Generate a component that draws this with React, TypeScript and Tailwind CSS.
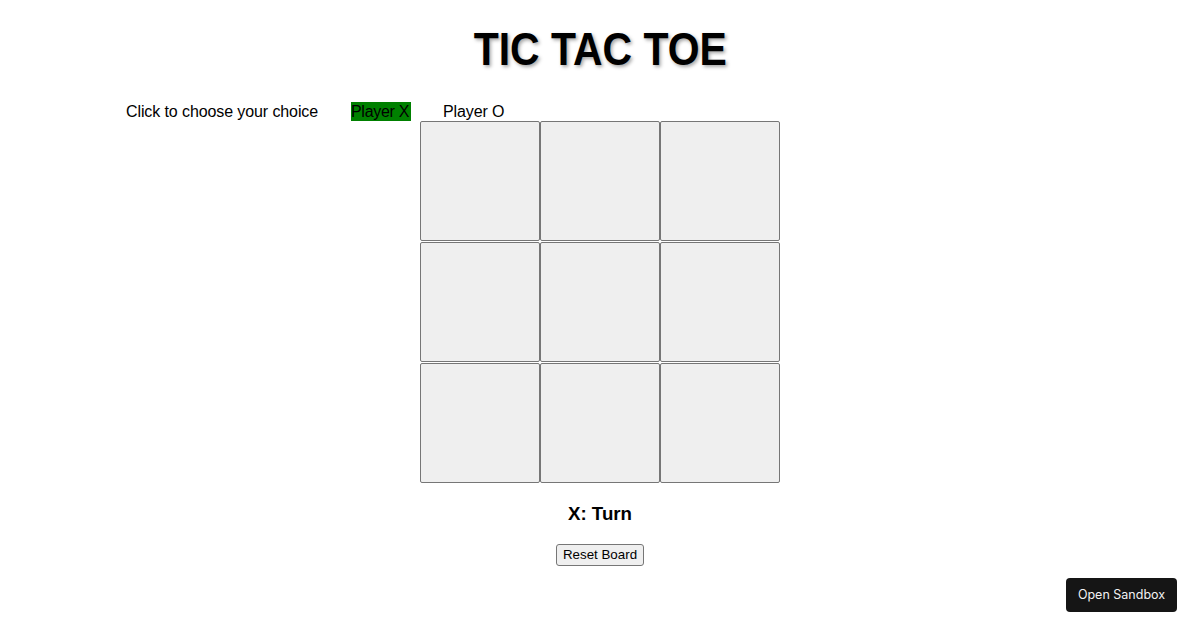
const cells = [0, 1, 2];

export default function App() {
  return (
    <div className="relative w-[1200px] h-[630px] bg-white text-black font-['Liberation_Sans',Arial,sans-serif]">
      {/* Title */}
      <div className="pt-[26px] flex justify-center">
        <h1 className="inline-block h-[46px] leading-[46px] text-[46px] font-bold scale-x-[0.89] [text-shadow:2px_2px_4px_rgba(0,0,0,0.35)]">
          TIC TAC TOE
        </h1>
      </div>

      {/* Player choice row */}
      <div className="mt-[30px] flex h-[19px] whitespace-nowrap pl-[126px] text-[16px] leading-[19px] tracking-[-0.1px]">
        <span className="w-[225px]">Click to choose your choice</span>
        <span className="inline-block h-[19px] w-[60px] bg-[#008000] tracking-[-0.3px]">Player X</span>
        <span className="ml-[32px]">Player O</span>
      </div>

      {/* Board */}
      <div className="mx-auto flex w-[360px] flex-col gap-[1px]">
        {cells.map((r) => (
          <div key={r} className="flex">
            {cells.map((c) => (
              <button
                key={c}
                className="h-[120px] w-[120px] rounded-[2px] border border-[#767676] bg-[#efefef]"
              />
            ))}
          </div>
        ))}
      </div>

      <h3 className="mt-[20px] text-center text-[18.7px] font-bold leading-[22px]">X: Turn</h3>

      <div className="mt-[19px] flex justify-center">
        <button className="h-[22px] rounded-[3px] border border-[#767676] bg-[#efefef] px-[6px] text-[13.33px] leading-[20px]">
          Reset Board
        </button>
      </div>

      {/* Sandbox button */}
      <button className="absolute bottom-[18px] right-[23px] h-[34px] w-[111px] rounded-[4px] bg-[#151515] font-['Inter',sans-serif] text-[12.5px] text-[#f2f2f2]">
        Open Sandbox
      </button>
    </div>
  );
}
